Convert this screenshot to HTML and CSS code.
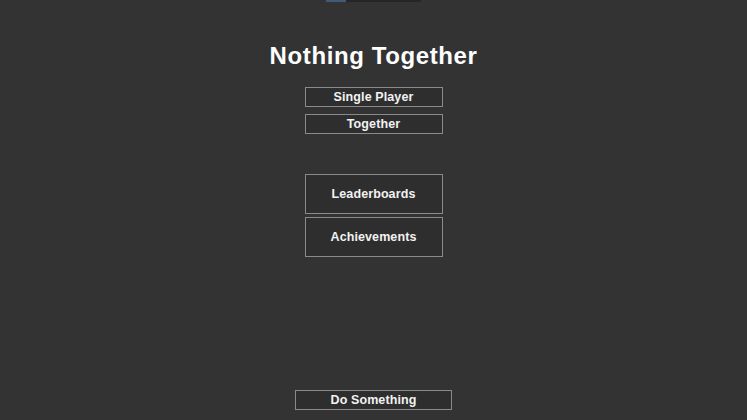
FILE: index.html
```html
<!DOCTYPE html>
<html lang="en">
<head>
	<meta charset="UTF-8"/>
	<title>Nothing Together</title>
	<link rel="stylesheet" href="styles.css">
</head>
<body>
	<div class="page">
		<div class="topbar"><span class="topbar-fill"></span></div>
		<h1 class="title">Nothing Together</h1>
		<div class="modes">
			<button class="btn small">Single Player</button>
			<button class="btn small">Together</button>
		</div>
		<div class="social">
			<button class="btn big">Leaderboards</button>
			<button class="btn big">Achievements</button>
		</div>
		<div class="bottom">
			<button class="btn action">Do Something</button>
		</div>
	</div>
</body>
</html>
```
FILE: styles.css
```css
* { margin: 0; padding: 0; box-sizing: border-box; }
html, body { height: 100%; }
body {
	background-color: #333333;
	color: #f2f2f2;
	font-family: "Liberation Sans", Arial, sans-serif;
	overflow: hidden;
}
.page {
	height: 420px;
	display: flex;
	flex-direction: column;
	align-items: center;
}
.topbar {
	width: 95px;
	height: 2px;
	margin-left: -1px;
	background-color: #262626;
	display: flex;
}
.topbar-fill {
	width: 20px;
	background-color: #3f5b78;
}
.title {
	margin-top: 40px;
	font-size: 24px;
	line-height: 28px;
	letter-spacing: 0.6px;
	font-weight: bold;
	color: #ffffff;
}
.btn {
	display: flex;
	align-items: center;
	justify-content: center;
	padding-bottom: 1px;
	background-color: #2e2e2e;
	border: 1px solid #8a8a8a;
	color: #f2f2f2;
	font-family: inherit;
	font-weight: bold;
	font-size: 12.5px;
	letter-spacing: 0.1px;
}
.modes {
	margin-top: 17px;
	display: flex;
	flex-direction: column;
	gap: 7px;
}
.small {
	width: 138px;
	height: 20px;
}
.social {
	margin-top: 40px;
	display: flex;
	flex-direction: column;
	gap: 3px;
}
.big {
	width: 138px;
	height: 40px;
}
.bottom {
	margin-top: auto;
	margin-bottom: 10px;
}
.action {
	width: 157px;
	height: 20px;
}
```
